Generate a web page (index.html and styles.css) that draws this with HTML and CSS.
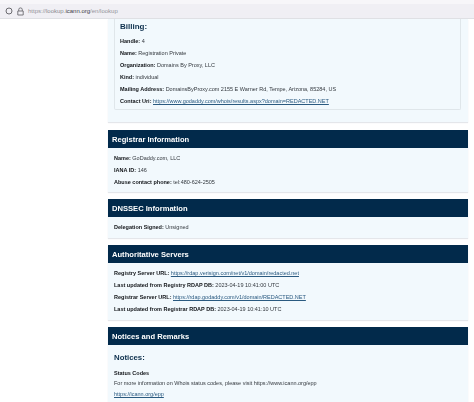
FILE: index.html
```html
<!DOCTYPE html>
<html lang="en">
<head>
<meta charset="utf-8">
<title>Lookup</title>
<link rel="stylesheet" href="styles.css">
</head>
<body>
<header class="browser">
  <svg class="ico" width="8" height="8" viewBox="0 0 8 8"><circle cx="4" cy="4" r="3" fill="none" stroke="#6b6b70" stroke-width="1"/></svg>
  <svg class="ico lock" width="7" height="9" viewBox="0 0 7 9"><path d="M1.7 4V2.7a1.8 1.8 0 0 1 3.6 0V4M.8 4h5.4v4H.8z" fill="none" stroke="#6b6b70" stroke-width=".9"/></svg>
  <div class="url">https://<span class="dim">lookup.</span><b>icann.org</b>/en/lookup</div>
</header>
<main class="page">
  <section class="sec first">
    <div class="body">
      <div class="card">
        <h3>Billing:</h3>
        <p><b>Handle:</b> 4</p>
        <p><b>Name:</b> Registration Private</p>
        <p><b>Organization:</b> Domains By Proxy, LLC</p>
        <p><b>Kind:</b> individual</p>
        <p><b>Mailing Address:</b> DomainsByProxy.com 2155 E Warner Rd, Tempe, Arizona, 85284, US</p>
        <p><b>Contact Uri:</b> <a href="#">https://www.godaddy.com/whois/results.aspx?domain=REDACTED.NET</a></p>
      </div>
    </div>
  </section>
  <section class="sec">
    <h2>Registrar Information</h2>
    <div class="body">
      <p><b>Name:</b> GoDaddy.com, LLC</p>
      <p><b>IANA ID:</b> 146</p>
      <p><b>Abuse contact phone:</b> tel:480-624-2505</p>
    </div>
  </section>
  <section class="sec">
    <h2>DNSSEC Information</h2>
    <div class="body">
      <p><b>Delegation Signed:</b> Unsigned</p>
    </div>
  </section>
  <section class="sec">
    <h2>Authoritative Servers</h2>
    <div class="body">
      <p><b>Registry Server URL:</b> <a href="#">https://rdap.verisign.com/net/v1/domain/redacted.net</a></p>
      <p><b>Last updated from Registry RDAP DB:</b> 2023-04-19 10:41:00 UTC</p>
      <p><b>Registrar Server URL:</b> <a href="#">https://rdap.godaddy.com/v1/domain/REDACTED.NET</a></p>
      <p><b>Last updated from Registrar RDAP DB:</b> 2023-04-19 10:41:10 UTC</p>
    </div>
  </section>
  <section class="sec">
    <h2>Notices and Remarks</h2>
    <div class="body notices">
      <h3>Notices:</h3>
      <p class="title"><b>Status Codes</b></p>
      <p class="desc">For more information on Whois status codes, please visit https://www.icann.org/epp</p>
      <p class="link"><a href="#">https://icann.org/epp</a></p>
    </div>
  </section>
</main>
</body>
</html>
```
FILE: styles.css
```css
html, body { margin: 0; padding: 0; height: 402px; overflow: hidden; background: #fff; }
body { font-family: "Liberation Sans", Arial, sans-serif; font-size: 5.5px; color: #33383e; }
.browser { height: 19px; box-sizing: border-box; padding: 4px 0 0 5px; background: linear-gradient(#f7f6f9 0 4px, #f0eff4 4px); border-bottom: 1px solid #dfe0e4; display: flex; align-items: center; gap: 4px; font-size: 6px; color: #8a8a90; }
.ico { flex: none; }
.url { color: #94949a; }
.url .dim { color: #8a8a90; }
.url b { color: #404044; font-weight: 400; }
.page { margin-left: 108px; width: 360px; display: flex; flex-direction: column; gap: 7.5px; filter: blur(.15px); }
.sec { background: #f2f9fd; box-shadow: 0 1px 1px #e4e6ea; }
.sec.first { height: 103px; }
.sec h2 { margin: 0; height: 18px; line-height: 19px; padding-left: 4px; background: #022a4b; color: #fff; font-size: 7.6px; font-weight: 700; }
.body { padding: 4px 6px 4px; }
.first .body { padding: 0 7px 0 6px; }
.body p { margin: 0; height: 12.15px; line-height: 12.15px; white-space: nowrap; }
b { color: #111418; font-weight: 700; }
a { color: #2a5a80; text-decoration: underline; }
.card { border: 1px solid #dfe6ea; border-top: 0; border-radius: 0 0 2px 2px; box-sizing: border-box; height: 91px; padding: 0 5px; }
.card h3 { margin: 0; height: 15.5px; line-height: 15.5px; font-size: 8px; color: #0c2f4c; }
.notices { height: 57px; box-sizing: border-box; padding-top: 5px; }
.notices h3 { margin: 1px 0 4px; font-size: 7.8px; line-height: 14px; color: #0c2f4c; }
.notices .title { height: 8px; line-height: 8px; }
.notices .desc { height: 11px; line-height: 11px; margin-top: 1px; }
.notices .link { height: 10px; line-height: 10px; }
```
